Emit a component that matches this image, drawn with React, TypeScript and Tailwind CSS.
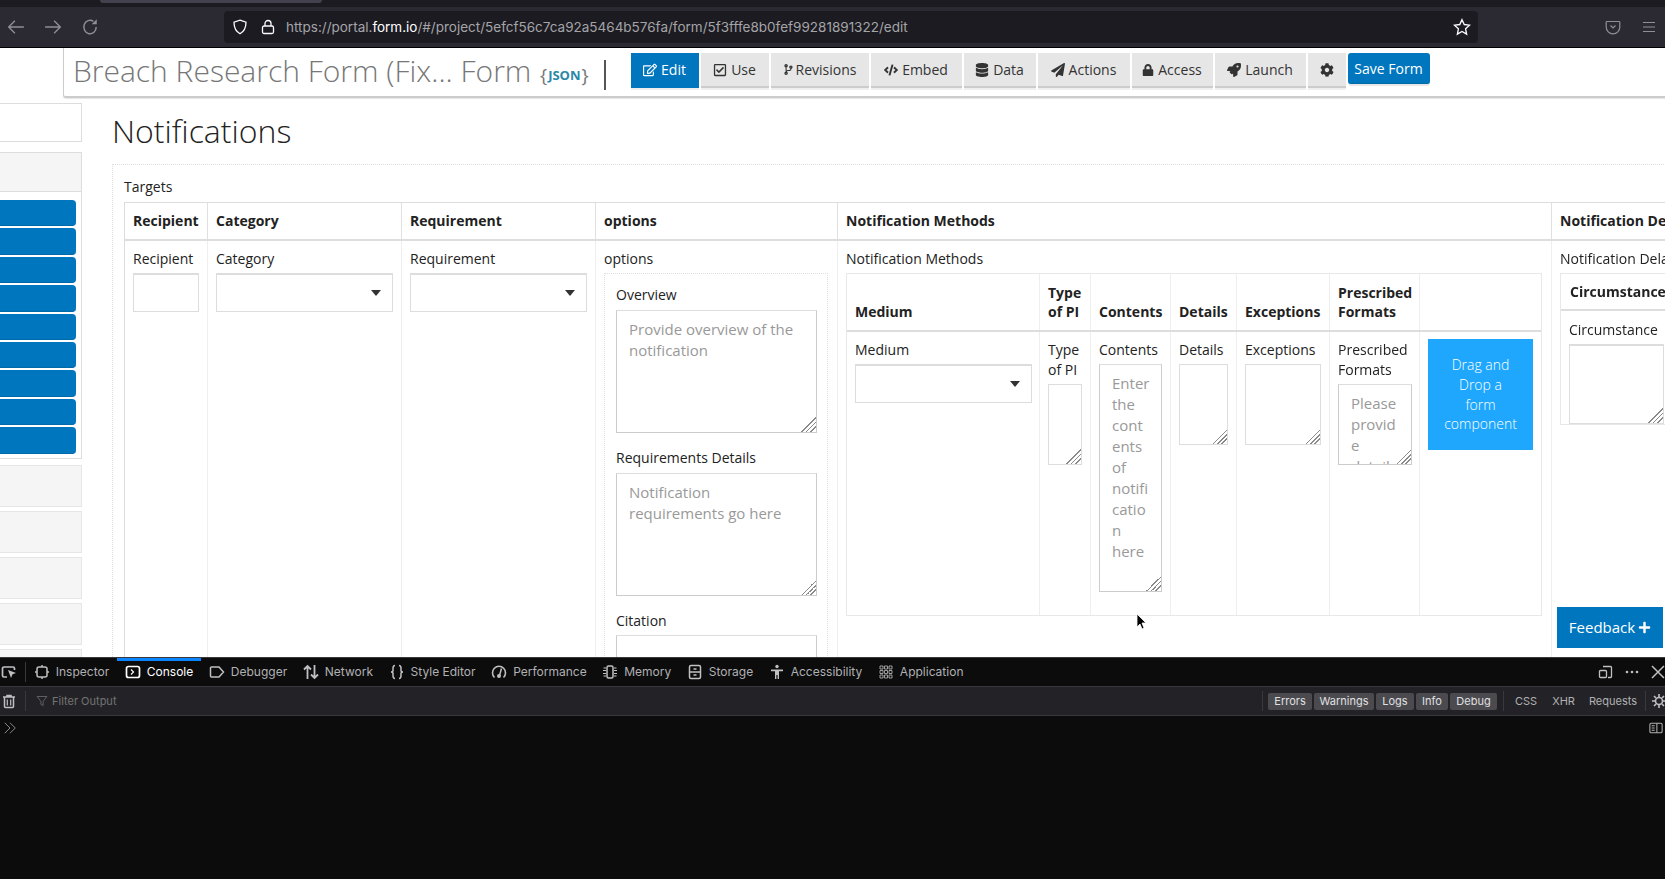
import {
  FaCode,
  FaCodeBranch,
  FaCog,
  FaDatabase,
  FaLock,
  FaPaperPlane,
  FaPlus,
  FaRegCheckSquare,
  FaRegEdit,
  FaRocket,
} from "react-icons/fa";

function Ico({ children, className = "text-[#c0c0c2]" }: { children: React.ReactNode; className?: string }) {
  return (
    <svg viewBox="0 0 16 16" fill="none" stroke="currentColor" strokeWidth="1.5" className={"h-4 w-4 shrink-0 " + className}>
      {children}
    </svg>
  );
}

const toolbarButtons = [
  { label: "Edit", icon: <FaRegEdit />, cls: "w-[68px] gap-[4px] bg-[#0076be] text-white border-[#0076be]" },
  { label: "Use", icon: <FaRegCheckSquare />, cls: "w-[68px] gap-[4px] bg-[#e6e6e6] text-[#333] border-[#ccc]" },
  { label: "Revisions", icon: <FaCodeBranch className="text-[11px]" />, cls: "w-[98px] gap-[2px] bg-[#e6e6e6] text-[#333] border-[#ccc]" },
  { label: "Embed", icon: <FaCode />, cls: "w-[91px] gap-[4px] bg-[#e6e6e6] text-[#333] border-[#ccc]" },
  { label: "Data", icon: <FaDatabase />, cls: "w-[72px] gap-[4px] bg-[#e6e6e6] text-[#333] border-[#ccc]" },
  { label: "Actions", icon: <FaPaperPlane />, cls: "w-[92px] gap-[4px] bg-[#e6e6e6] text-[#333] border-[#ccc]" },
  { label: "Access", icon: <FaLock className="text-[12px]" />, cls: "w-[81px] gap-[4px] bg-[#e6e6e6] text-[#333] border-[#ccc]" },
  { label: "Launch", icon: <FaRocket />, cls: "w-[91px] gap-[4px] bg-[#e6e6e6] text-[#333] border-[#ccc]" },
  { label: "", icon: <FaCog />, cls: "w-[38px] bg-[#e6e6e6] text-[#333] border-[#ccc]" },
];

const devTabs = [
  {
    label: "Inspector",
    icon: (
      <Ico>
        <rect x="3" y="3" width="10" height="10" rx="2" />
        <path d="M8 1v2M8 13v2M1 8h2M13 8h2" />
      </Ico>
    ),
  },
  {
    label: "Console",
    active: true,
    icon: (
      <Ico className="text-white">
        <rect x="1.5" y="2.5" width="13" height="11" rx="2" strokeWidth="1.7" />
        <path d="M6 5.5 8.5 8 6 10.5" strokeWidth="1.2" />
      </Ico>
    ),
  },
  {
    label: "Debugger",
    icon: (
      <Ico>
        <path d="M2.5 3h7.5l4.500 5-4.500 5H2.5a1 1 0 0 1-1-1V4a1 1 0 0 1 1-1z" />
      </Ico>
    ),
  },
  {
    label: "Network",
    icon: (
      <Ico>
        <path d="M4.500 15V2M1 5.500 4.500 2 8 5.500" strokeWidth="1.8" />
        <path d="M11.500 1v13M8 10.500l3.500 3.500 3.500-3.500" strokeWidth="1.8" />
      </Ico>
    ),
  },
  {
    label: "Style Editor",
    icon: (
      <Ico>
        <path d="M6 1.500C4 1.500 4 3 4 4.500v2C4 7.500 3.500 8 2 8 3.500 8 4 8.500 4 9.500v2C4 13 4 14.500 6 14.500M10 1.500c2 0 2 1.500 2 3v2c0 1 .5 1.500 2 1.500-1.500 0-2 .5-2 1.500v2c0 1.500 0 3-2 3" />
      </Ico>
    ),
  },
  {
    label: "Performance",
    icon: (
      <Ico>
        <path d="M3.500 13.500A6.500 6.500 0 1 1 12.500 13.500" strokeWidth="1.600" />
        <path d="m10.500 4.500-2 7" />
        <circle cx="8" cy="12" r="2" fill="currentColor" stroke="none" />
      </Ico>
    ),
  },
  {
    label: "Memory",
    icon: (
      <Ico>
        <rect x="5" y="2" width="6" height="12" rx="1.500" />
        <path d="M1.500 4h2.500M1 6.500h3M1 9.500h3M1.500 12h2.500M12 4h2.500M12 6.500h3M12 9.500h3M12 12h2.500" strokeWidth="1" />
      </Ico>
    ),
  },
  {
    label: "Storage",
    icon: (
      <Ico>
        <rect x="2.500" y="1.500" width="11" height="13" rx="1.500" />
        <path d="M2.500 8h11M6.500 5h3M6.500 11h3" />
      </Ico>
    ),
  },
  {
    label: "Accessibility",
    icon: (
      <Ico>
        <circle cx="8" cy="2.500" r="1.700" fill="currentColor" stroke="none" />
        <path d="M2 5.500h12v1.700H10v7.800H8.600v-4H7.400v4H6V7.200H2z" fill="currentColor" stroke="none" />
      </Ico>
    ),
  },
  {
    label: "Application",
    icon: (
      <Ico>
        <path
          d="M2 2h3v3H2zM6.500 2h3v3h-3zM11 2h3v3h-3zM2 6.500h3v3H2zM6.500 6.500h3v3h-3zM11 6.500h3v3h-3zM2 11h3v3H2zM6.500 11h3v3h-3zM11 11h3v3h-3z"
          strokeWidth="0.8"
        />
      </Ico>
    ),
  },
];

const logLevels = [
  { label: "Errors", cls: "w-[44px]" },
  { label: "Warnings", cls: "w-[60px]" },
  { label: "Logs", cls: "w-[38px]" },
  { label: "Info", cls: "w-[32px]" },
  { label: "Debug", cls: "w-[47px]" },
];

// the hatch on the textarea corner is bigger in the reference than chromium's default
const hatch =
  " [&::-webkit-resizer]:bg-[linear-gradient(135deg,transparent_50%,#8a8a8a_50%,#8a8a8a_56%,transparent_56%,transparent_64%,#8a8a8a_64%,#8a8a8a_70%,transparent_70%,transparent_78%,#8a8a8a_78%,#8a8a8a_84%,transparent_84%)]";
const gridInput = "block border border-[#ddd] bg-white outline-none" + hatch;
const textArea =
  "block border border-[#ccc] border-t-[#ddd] bg-white py-[8px] text-[15px] leading-[21px] text-[#555] outline-none placeholder:text-[#999]" + hatch;

function Caret() {
  return <span className="h-0 w-0 border-x-[5px] border-t-[6px] border-x-transparent border-t-[#333]" />;
}

function SelectBox({ className }: { className: string }) {
  return (
    <div className={"flex h-[39px] items-center justify-end border border-t-2 border-[#ddd] pr-[11px] " + className}>
      <Caret />
    </div>
  );
}

function Browser() {
  return (
    <div className="h-[48px] shrink-0 border-b border-black bg-[#2b2a33] font-['Inter',sans-serif]">
      <div className="h-[7px] bg-[#1c1b22] pl-[100px]">
        <div className="h-[3px] w-[222px] rounded-b-[3px] bg-[#42414d]" />
      </div>
      <div className="flex h-[40px] items-center">
        <div className="flex w-[224px] items-center pl-[7px] text-[#8f8f94]">
          <svg viewBox="0 0 16 16" fill="none" stroke="currentColor" strokeWidth="1.200" className="h-[18px] w-[18px]">
            <path d="M15 8H1.500M7 2.500 1.500 8 7 13.500" />
          </svg>
          <svg viewBox="0 0 16 16" fill="none" stroke="currentColor" strokeWidth="1.200" className="ml-[19px] h-[18px] w-[18px]">
            <path d="M1 8h13.500M9 2.500 14.500 8 9 13.500" />
          </svg>
          <svg viewBox="0 0 16 16" fill="none" stroke="currentColor" strokeWidth="1.300" className="ml-[19px] h-[18px] w-[18px]">
            <path d="M13.500 8A5.500 6 0 1 1 11 3" />
            <path d="M14 1v4.500H9.500z" fill="currentColor" stroke="none" />
          </svg>
        </div>
        <div className="flex h-[32px] w-[1254px] items-center rounded-[4px] bg-[#1c1b22] pl-[8px] pr-[8px]">
          <svg viewBox="0 0 16 16" fill="none" stroke="#fbfbfe" strokeWidth="1.300" className="h-4 w-4">
            <path d="M8 1.200 14 3.200C14 9 12 12.500 8 14.800 4 12.500 2 9 2 3.200z" />
          </svg>
          <svg viewBox="0 0 16 16" fill="none" stroke="#fbfbfe" strokeWidth="1.300" className="ml-[12px] h-4 w-4">
            <rect x="2.500" y="7" width="11" height="7.500" rx="1.500" />
            <path d="M5 7V4.500a3 3 0 0 1 6 0V7" />
          </svg>
          <span className="ml-[10px] text-[13.5px] text-[#a5a5a8]">
            https://portal.<span className="text-white">form.io</span>
            /#/project/5efcf56c7ca92a5464b576fa/form/5f3fffe8b0fef99281891322/edit
          </span>
          <svg viewBox="0 0 16 16" fill="none" stroke="#fbfbfe" strokeWidth="1.200" className="ml-auto mr-[-1px] h-[18px] w-[18px]">
            <path d="m8 1.500 2 4.300 4.700.6-3.500 3.200.9 4.700L8 12l-4.100 2.300.9-4.700L1.300 6.400 6 5.800z" />
          </svg>
        </div>
        <div className="flex flex-1 items-center justify-end pr-[8px] text-[#8f8f94]">
          <svg viewBox="0 0 16 16" fill="none" stroke="currentColor" strokeWidth="1.200" className="h-4 w-4">
            <path d="M2 2.500h12a.8.8 0 0 1 .8.8V8A6.800 6.800 0 0 1 1.200 8V3.300a.8.8 0 0 1 .8-.8z" />
            <path d="M5.500 6.500 8 9l2.500-2.500" />
          </svg>
          <svg viewBox="0 0 16 16" fill="none" stroke="currentColor" strokeWidth="1.200" className="ml-[20px] h-4 w-4">
            <path d="M2 3.500h12M2 8h12M2 12.500h12" />
          </svg>
        </div>
      </div>
    </div>
  );
}

function FormHeader() {
  return (
    <div className="ml-[63px] flex h-[50px] shrink-0 items-start rounded-bl-[3px] border-b-2 border-l border-[#ccc] pl-[9px] shadow-[0_1px_1px_rgba(0,0,0,0.1)]">
      <h2 className="mt-[3px] w-[467px] whitespace-nowrap text-[30px] font-light leading-[40px] text-[#777]">
        Breach Research Form (Fix... Form
      </h2>
      <div className="mt-[13px] flex w-[64px] items-center text-[#777]">
        <span className="text-[19px]">{"{"}</span>
        <span className="mx-[1px] text-[13px] font-bold text-[#2a87a8]">JSON</span>
        <span className="text-[19px]">{"}"}</span>
      </div>
      <div className="mt-[12px] h-[30px] w-[1.5px] bg-[#555]" />
      <div className="ml-[25px] mt-[5px] flex gap-[2px]">
        {toolbarButtons.map((b) => (
          <div key={b.label || "settings"} className={"flex h-[35px] items-center justify-center border-b-2 text-[14px] shadow-[0_2px_0_#efefef] " + b.cls}>
            {b.icon}
            {b.label && <span>{b.label}</span>}
          </div>
        ))}
        <div className="flex h-[31px] w-[82px] items-center justify-center rounded-[3px] border-b border-[#0069a8] bg-[#0076be] text-[14px] text-white shadow-[0_2px_0_#e8e8e8]">
          Save Form
        </div>
      </div>
    </div>
  );
}

function Sidebar() {
  return (
    <div className="w-[82px] shrink-0 pt-[5px]">
      <div className="h-[39px] border-y border-r border-[#ddd]" />
      <div className="mt-[10px] border-y border-r border-[#ddd]">
        <div className="h-[39px] border-b border-[#ddd] bg-[#f5f5f5]" />
        <div className="flex flex-col gap-[2px] pb-[4px] pr-[5px] pt-[8px]">
          {[1, 2, 3, 4, 5, 6, 7, 8, 9].map((n) => (
            <div key={n} className="h-[26.4px] rounded-r-[4px] border-b border-[#0069a8] bg-[#0076be]" />
          ))}
        </div>
      </div>
      <div className="mt-[6px] flex flex-col gap-[4px]">
        {[1, 2, 3, 4, 5].map((n) => (
          <div key={n} className="h-[42px] shrink-0 border-y border-r border-[#e6e6e6] bg-[#f5f5f5]" />
        ))}
      </div>
    </div>
  );
}

function NotificationMethods() {
  const headCell = "flex shrink-0 items-end border-r border-[#eee] px-[8px] pb-[8px] leading-[19.6px] font-bold text-[#222]";
  const bodyCell = "shrink-0 border-r border-[#eee] px-[8px] pt-[8px] leading-[19.6px]";
  return (
    <div className="w-[696px] border border-[#e8e8e8]">
      <div className="flex h-[58px] border-b-2 border-[#ddd]">
        <div className={headCell + " w-[193px]"}>Medium</div>
        <div className={headCell + " w-[51px]"}>Type of PI</div>
        <div className={headCell + " w-[80px]"}>Contents</div>
        <div className={headCell + " w-[66px]"}>Details</div>
        <div className={headCell + " w-[93px]"}>Exceptions</div>
        <div className={headCell + " w-[90px]"}>Prescribed Formats</div>
        <div className="flex-1" />
      </div>
      <div className="flex h-[283px]">
        <div className={bodyCell + " w-[193px]"}>
          Medium
          <SelectBox className="mt-[4px] w-[177px]" />
        </div>
        <div className={bodyCell + " w-[51px]"}>
          Type of PI
          <textarea className={gridInput + " mt-[5px] h-[81px] w-[34px]"} />
        </div>
        <div className={bodyCell + " w-[80px]"}>
          Contents
          <textarea
            className={textArea + " mt-[4px] h-[228px] w-[63px] pl-[12px] pr-[10px]"}
            placeholder="Enter the contents of notification here"
          />
        </div>
        <div className={bodyCell + " w-[66px]"}>
          Details
          <textarea className={gridInput + " mt-[4px] h-[81px] w-[49px]"} />
        </div>
        <div className={bodyCell + " w-[93px]"}>
          Exceptions
          <textarea className={gridInput + " mt-[4px] h-[81px] w-[76px]"} />
        </div>
        <div className={bodyCell + " w-[90px]"}>
          Prescribed Formats
          <textarea
            className={textArea + " mt-[5px] h-[81px] w-[74px] px-[12px]"}
            placeholder="Please provide details"
          />
        </div>
        <div className="flex-1 px-[8px] pt-[7px]">
          <div className="flex h-[111px] w-[105px] items-center justify-center bg-[#1ea7fd] px-[16px] text-center font-light leading-[19.6px] text-white">
            Drag and Drop a form component
          </div>
        </div>
      </div>
    </div>
  );
}

function TargetsTable() {
  const head = "flex shrink-0 items-center border-r border-[#e0e0e0] px-[8px] font-bold text-[#222]";
  const cell = "shrink-0 border-r border-[#eee] px-[8px] pt-[8px]";
  return (
    <div className="w-[1600px] border-y border-l border-[#ddd] text-[14px] leading-[20px] text-[#222]">
      <div className="flex h-[38px] border-b-2 border-[#ddd]">
        <div className={head + " w-[83px]"}>Recipient</div>
        <div className={head + " w-[194px]"}>Category</div>
        <div className={head + " w-[194px]"}>Requirement</div>
        <div className={head + " w-[242px]"}>options</div>
        <div className={head + " w-[714px]"}>Notification Methods</div>
        <div className={head + " w-[170px] whitespace-nowrap"}>Notification Delay</div>
      </div>
      <div className="flex h-[500px]">
        <div className={cell + " w-[83px]"}>
          Recipient
          <input className={gridInput + " mt-[4px] h-[39px] w-[66px] border-t-2"} />
        </div>
        <div className={cell + " w-[194px]"}>
          Category
          <SelectBox className="mt-[4px] w-[177px]" />
        </div>
        <div className={cell + " w-[194px]"}>
          Requirement
          <SelectBox className="mt-[4px] w-[177px]" />
        </div>
        <div className={cell + " w-[242px]"}>
          options
          <div className="mt-[4px] w-[224px] border border-dotted border-[#ddd] p-[11px]">
            <div>Overview</div>
            <textarea className={textArea + " mt-[5px] h-[123px] w-[201px] px-[12px]"} placeholder="Provide overview of the notification" />
            <div className="mt-[15px]">Requirements Details</div>
            <textarea className={textArea + " mt-[5px] h-[123px] w-[201px] px-[12px]"} placeholder="Notification requirements go here" />
            <div className="mt-[15px]">Citation</div>
            <textarea className={textArea + " mt-[4px] h-[123px] w-[201px] px-[12px]"} />
          </div>
        </div>
        <div className={cell + " w-[714px]"}>
          Notification Methods
          <div className="mt-[4px]">
            <NotificationMethods />
          </div>
        </div>
        <div className={cell + " w-[170px] whitespace-nowrap"}>
          Notification Delay
          <div className="mt-[4px] w-[140px] border-y border-l border-[#e8e8e8]">
            <div className="flex h-[37px] items-center border-b-2 border-[#ddd] px-[9px] font-bold">Circumstance</div>
            <div className="px-[8px] pt-[9px]">
              Circumstance
              <textarea className={gridInput + " mt-[4px] h-[80px] w-[95px] border-t-2"} />
            </div>
          </div>
        </div>
      </div>
    </div>
  );
}

function DevTools() {
  return (
    <div className="flex h-[222px] shrink-0 flex-col overflow-hidden border-t border-[#38383d] bg-[#0c0c0d] font-['Inter',sans-serif] text-[12px] text-[#b1b1b3]">
      <div className="flex h-[29px] items-center border-b border-[#38383d]">
        <div className="flex h-full w-[25px] items-center pl-[1px]">
          <Ico>
            <path d="M6 13H3a1.500 1.500 0 0 1-1.500-1.500v-7A1.500 1.500 0 0 1 3 3h9a1.500 1.500 0 0 1 1.500 1.500V6" strokeWidth="1.700" />
            <path d="m7 6 8 3-3.500 1.200L10 14z" fill="currentColor" stroke="none" />
          </Ico>
        </div>
        <div className="h-[20px] w-px bg-[#38383d]" />
        {devTabs.map((t) => (
          <div
            key={t.label}
            className={
              "flex h-full items-center gap-[6px] border-t-[3px] px-[7.8px] pb-[3px] " +
              (t.active ? "border-[#0a84ff] text-white" : "border-transparent")
            }
          >
            {t.icon}
            <span>{t.label}</span>
          </div>
        ))}
        <div className="ml-auto mr-[-1px] flex items-center gap-[10px]">
          <Ico>
            <path d="M5 2.500h7.500a1 1 0 0 1 1 1v9a1 1 0 0 1-1 1H10M2.500 6.500h5a1 1 0 0 1 1 1v5a1 1 0 0 1-1 1h-5a1 1 0 0 1-1-1v-5a1 1 0 0 1 1-1z" strokeWidth="1.300" />
          </Ico>
          <Ico>
            <circle cx="3" cy="8" r="1.300" fill="currentColor" stroke="none" />
            <circle cx="8" cy="8" r="1.300" fill="currentColor" stroke="none" />
            <circle cx="13" cy="8" r="1.300" fill="currentColor" stroke="none" />
          </Ico>
          <Ico>
            <path d="m2 2 12 12M14 2 2 14" />
          </Ico>
        </div>
      </div>
      <div className="flex h-[29px] items-center border-b border-[#38383d] bg-[#232327] text-[11px]">
        <div className="flex w-[25px] pl-[1px]">
          <Ico>
            <path d="M2 4h12M6 4V2.500h4V4M3.500 4v9.500a1 1 0 0 0 1 1h7a1 1 0 0 0 1-1V4" />
            <path d="M6.300 6.500v6M9.700 6.500v6" strokeWidth="1.200" />
          </Ico>
        </div>
        <div className="h-[20px] w-px bg-[#38383d]" />
        <svg viewBox="0 0 16 16" fill="none" stroke="currentColor" strokeWidth="1" className="ml-[10px] h-[12px] w-[12px] text-[#737373]">
          <path d="M1.500 2h13L9.500 8.500V14l-3-1.500v-4z" />
        </svg>
        <span className="ml-[4px] text-[#737373]">Filter Output</span>
        <div className="ml-auto h-[20px] w-px bg-[#38383d]" />
        <div className="ml-[5px] flex gap-[2px]">
          {logLevels.map((l) => (
            <div key={l.label} className={"flex h-[17px] items-center justify-center rounded-[2px] bg-[#4a4a4f] text-[#e0e0e2] " + l.cls}>
              {l.label}
            </div>
          ))}
        </div>
        <div className="ml-[6px] h-[20px] w-px bg-[#38383d]" />
        <span className="ml-[11px]">CSS</span>
        <span className="ml-[15px]">XHR</span>
        <span className="ml-[14px]">Requests</span>
        <div className="ml-[8px] h-[20px] w-px bg-[#38383d]" />
        <svg viewBox="0 0 16 16" className="ml-[5px] mr-[-2px] h-[16px] w-[16px] shrink-0 text-[#c0c0c2]" fill="none" stroke="currentColor" strokeWidth="1.600">
          <circle cx="8" cy="8" r="3.500" />
          <path d="M8 1v3M8 12v3M1 8h3M12 8h3M3 3l2 2M11 11l2 2M13 3l-2 2M5 11l-2 2" />
        </svg>
      </div>
      <div className="flex items-center justify-between px-[3px] pt-[5px]">
        <svg viewBox="0 0 16 16" fill="none" stroke="currentColor" strokeWidth="1.100" className="h-[14px] w-[14px] text-[#8f8f94]">
          <path d="m2 2 6 6-6 6M8 2l6 6-6 6" />
        </svg>
        <svg viewBox="0 0 16 16" fill="none" stroke="currentColor" strokeWidth="1.200" className="mr-[-1px] h-[14px] w-[14px]">
          <rect x="1" y="2.500" width="14" height="11" rx="1.500" />
          <path d="M9 2.500v11M3 5.500h3.500M3 8h3.500M3 10.500h3.500" />
        </svg>
      </div>
    </div>
  );
}

export default function App() {
  return (
    <div className="flex h-[879px] w-[1665px] flex-col overflow-hidden bg-white font-['Open_Sans',sans-serif]">
      <Browser />
      <FormHeader />
      <div className="relative flex min-h-0 flex-1 overflow-hidden">
        <Sidebar />
        <div className="ml-[30px] w-[1600px] shrink-0">
          <h1 className="mt-[11px] h-[44px] text-[32px] font-light leading-[44px] text-[#222]">Notifications</h1>
          <div className="mt-[11px] border border-r-0 border-dotted border-[#ddd] pl-[11px] pt-[12px]">
            <div className="mb-[5px] text-[14px] leading-[20px] text-[#222]">Targets</div>
            <TargetsTable />
          </div>
        </div>
        <div className="absolute bottom-[9px] right-[2px] flex h-[41px] w-[106px] items-center justify-center gap-[3px] bg-[#0076be] text-[15px] text-white">
          Feedback <FaPlus className="text-[13px]" />
        </div>
        <svg viewBox="0 0 12 18" className="absolute left-[1136px] top-[515px] h-[18px] w-[12px]">
          <path d="M1 1v13l3-3 2 5 2-1-2-5h4z" fill="#000" stroke="#fff" strokeWidth="0.800" />
        </svg>
      </div>
      <DevTools />
    </div>
  );
}
